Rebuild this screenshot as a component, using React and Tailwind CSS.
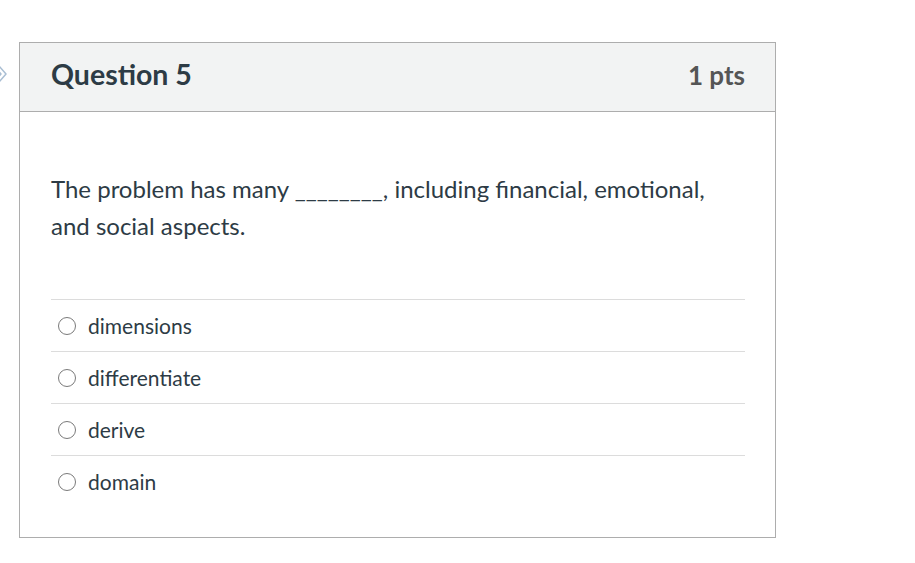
import React from 'react';

const answers = ['dimensions', 'differentiate', 'derive', 'domain'];

export default function App() {
  return (
    <div className="w-full h-[563px] bg-white flex pt-[42px] font-['Lato',sans-serif]">
      {/* Left nav chevron (cut off) */}
      <div className="w-[19px] shrink-0">
        <svg width="19" height="40" viewBox="0 0 19 40" className="mt-[22px]">
          <polygon
            points="-6,2 -1,2 6,10 -1,18 -6,18 1,10"
            fill="none"
            stroke="#a9bed3"
            strokeWidth="1.5"
            strokeLinejoin="round"
          />
        </svg>
      </div>

      <div className="w-[757px] h-[496px] border border-[#adadad] flex flex-col">
        {/* Header */}
        <div className="h-[69px] shrink-0 bg-[#f2f3f3] border-b border-[#adadad] flex items-center justify-between pl-[31px] pr-[30px] pb-[5px]">
          <h2 className="text-[28.5px] font-bold text-[#2d3b45]">Question 5</h2>
          <span className="text-[26px] font-bold text-[#555555] pt-[2px]">1 pts</span>
        </div>

        {/* Body */}
        <div className="pl-[31px] pr-[30px] pt-[58px]">
          <p className="text-[24px] leading-[37px] text-[#2d3b45]">
            The problem has many ________, including financial, emotional, and social aspects.
          </p>

          <div className="mt-[55px]">
            {answers.map((a) => (
              <label key={a} className="h-[52px] border-t border-[#dcdcdc] flex items-center pl-[7px] gap-[12px] cursor-pointer">
                <span className="w-[18px] h-[18px] rounded-full border-[1.5px] border-[#7a7a7a] bg-white shrink-0" />
                <span className="text-[21px] text-[#2d3b45] pt-[1px]">{a}</span>
              </label>
            ))}
          </div>
        </div>
      </div>
    </div>
  );
}
